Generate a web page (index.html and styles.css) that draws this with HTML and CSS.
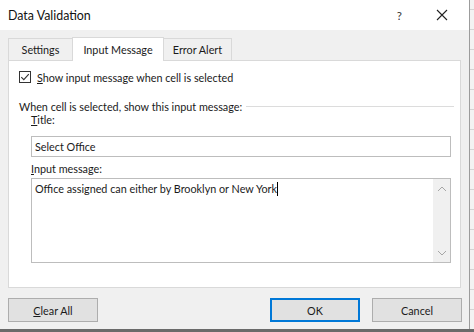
FILE: index.html
```html
<!DOCTYPE html>
<html>
<head>
<meta charset="utf-8">
<link rel="stylesheet" href="styles.css">
</head>
<body>
<div class="screen">
  <div class="dialog">
    <div class="titlebar">
      <span class="title">Data Validation</span>
      <span class="help">?</span>
      <svg class="close" width="12" height="12" viewBox="0 0 12 12"><path d="M1 1L11 11M11 1L1 11" stroke="#222" stroke-width="1.1" fill="none"/></svg>
    </div>
    <div class="tabs">
      <div class="tab">Settings</div>
      <div class="tab active">Input Message</div>
      <div class="tab">Error Alert</div>
    </div>
    <div class="panel">
      <div class="checkrow">
        <span class="checkbox"><svg width="12" height="12" viewBox="0 0 12 12"><path d="M2.3 6.2L4.8 8.7L9.8 3.2" stroke="#333" stroke-width="1.1" fill="none"/></svg></span>
        <span><u>S</u>how input message when cell is selected</span>
      </div>
      <div class="group">
        <span>When cell is selected, show this input message:</span>
        <span class="rule"></span>
      </div>
      <div class="field">
        <div class="label"><u>T</u>itle:</div>
        <div class="input">Select Office</div>
        <div class="label label2"><u>I</u>nput message:</div>
        <div class="textarea">
          <div class="text">Office assigned can either by Brooklyn or New York<span class="caret"></span></div>
          <div class="scroll">
            <svg width="10" height="6" viewBox="0 0 10 6"><path d="M1 5L5 1L9 5" stroke="#a6a6a6" stroke-width="1" fill="none"/></svg>
            <svg width="10" height="6" viewBox="0 0 10 6"><path d="M1 1L5 5L9 1" stroke="#a6a6a6" stroke-width="1" fill="none"/></svg>
          </div>
        </div>
      </div>
    </div>
    <div class="buttons">
      <div class="btn"><u>C</u>lear All</div>
      <div class="spacer"></div>
      <div class="btn ok">OK</div>
      <div class="btn cancel">Cancel</div>
    </div>
  </div>
  <div class="side"></div>
</div>
<div class="bottom"></div>
</body>
</html>
```
FILE: styles.css
```css
html, body {
  margin: 0;
  padding: 0;
}
body {
  width: 474px;
  height: 332px;
  overflow: hidden;
  background: #5f5f5f;
  font-family: Lato, "Noto Sans", sans-serif;
  font-size: 10.8px;
  color: #1a1a1a;
}
u {
  text-decoration: underline;
  text-underline-offset: 1px;
}
.screen {
  display: flex;
  height: 329px;
}
.dialog {
  width: 469px;
  height: 329px;
  background: #f0f0f0;
  border-right: 1px solid #9c9c9c;
  display: flex;
  flex-direction: column;
}
.side {
  flex: 1;
  background: linear-gradient(#d4d4d4 0 1px, transparent 1px) 0 9px / 100% 20px, #f3f3f3;
}
.bottom {
  height: 3px;
  background: #6a6a6a;
}
.titlebar {
  height: 30px;
  background: #ffffff;
  display: flex;
  align-items: center;
  padding-left: 8px;
  flex-shrink: 0;
}
.title {
  font-size: 12.4px;
  color: #111;
  flex: 1;
}
.help {
  font-size: 11.5px;
  color: #333;
  margin-right: 34px;
}
.close {
  margin-right: 21px;
}
.tabs {
  display: flex;
  align-items: flex-end;
  margin: 7px 0 0 8px;
  height: 23px;
  position: relative;
  z-index: 1;
}
.tab {
  height: 22px;
  box-sizing: border-box;
  border: 1px solid #d9d9d9;
  border-bottom: none;
  background: #f0f0f0;
  display: flex;
  align-items: center;
  justify-content: center;
  white-space: nowrap;
  color: #1a1a1a;
}
.tab:first-child {
  width: 64px;
  border-right: none;
}
.tab.active {
  width: 92px;
  height: 24px;
  background: #ffffff;
  margin-bottom: -1px;
  padding-bottom: 1px;
}
.tab:last-child {
  width: 68px;
  border-left: none;
}
.panel {
  margin: 0 8px;
  height: 228px;
  box-sizing: border-box;
  background: #ffffff;
  border: 1px solid #d9d9d9;
  padding: 9px 0 0 10px;
}
.checkrow {
  display: flex;
  align-items: center;
  gap: 6px;
  height: 14px;
}
.checkbox {
  width: 12px;
  height: 12px;
  box-sizing: border-box;
  border: 1px solid #333;
  display: flex;
}
.checkbox svg {
  margin: -1px;
}
.group {
  display: flex;
  align-items: center;
  margin-top: 14px;
  height: 16px;
  padding-right: 6px;
}
.rule {
  flex: 1;
  height: 1px;
  background: #dcdcdc;
  margin-left: 4px;
}
.field {
  padding-left: 12px;
  padding-right: 9px;
}
.label {
  margin-top: -2px;
  height: 16px;
  line-height: 16px;
}
.label2 {
  margin-top: 4px;
}
.input {
  margin-top: 8px;
  height: 21px;
  box-sizing: border-box;
  border: 1px solid #bdbdbd;
  padding: 0 3px;
  line-height: 19px;
}
.textarea {
  margin-top: 1px;
  height: 85px;
  box-sizing: border-box;
  border: 1px solid #bdbdbd;
  display: flex;
}
.text {
  flex: 1;
  padding: 1px 3px 0;
  line-height: 18px;
}
.caret {
  display: inline-block;
  width: 1px;
  height: 14px;
  background: #000;
  vertical-align: -3px;
}
.scroll {
  width: 17px;
  background: #f0f0f0;
  display: flex;
  flex-direction: column;
  justify-content: space-between;
  align-items: center;
  padding: 7px 0 6px;
}
.buttons {
  display: flex;
  margin-top: 10px;
  padding: 0 7px 0 8px;
}
.btn {
  width: 90px;
  height: 24px;
  box-sizing: border-box;
  border: 1px solid #adadad;
  background: #e1e1e1;
  display: flex;
  align-items: center;
  justify-content: center;
  color: #1a1a1a;
}
.spacer {
  flex: 1;
}
.ok {
  border: 2px solid #0078d7;
  margin-right: 12px;
}
```
